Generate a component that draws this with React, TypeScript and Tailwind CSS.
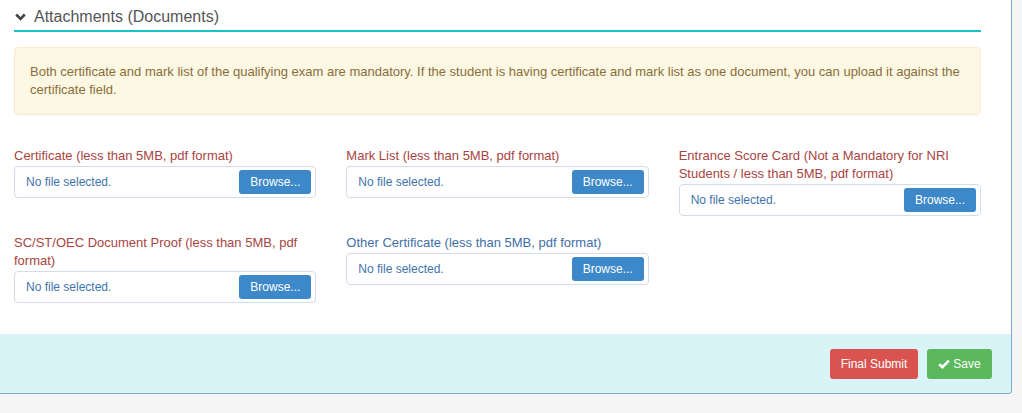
import React from 'react';

/**
 * Attachments step of the application form: document uploads + submit footer.
 */

type Field = { label: string; tone: 'red' | 'blue' };

const FIELDS: Field[] = [
    { label: 'Certificate (less than 5MB, pdf format)', tone: 'red' },
    { label: 'Mark List (less than 5MB, pdf format)', tone: 'red' },
    { label: 'Entrance Score Card (Not a Mandatory for NRI Students / less than 5MB, pdf format)', tone: 'red' },
    { label: 'SC/ST/OEC Document Proof (less than 5MB, pdf format)', tone: 'red' },
    { label: 'Other Certificate (less than 5MB, pdf format)', tone: 'blue' },
];

function FileField({ label, tone }: Field) {
    return (
        <div className="flex flex-col self-start">
            <label className={`text-[13px] leading-[18px] ${tone === 'red' ? 'text-[#a94442]' : 'text-[#3f6fa8]'}`}>{label}</label>
            <div className="mt-[1px] flex h-[32px] items-center justify-between rounded-[4px] border border-[#d3dde8] bg-white pl-[11px] pr-[4px]">
                <span className="text-[12px] text-[#3f73ad]">No file selected.</span>
                <button type="button" className="h-[24px] w-[72px] rounded-[3px] bg-[#3d88c9] text-[12px] text-white">
                    Browse...
                </button>
            </div>
        </div>
    );
}

export default function App() {
    return (
        <div className="min-h-screen bg-[#f5f5f5] font-['Liberation_Sans',Arial,sans-serif]">
            <div className="w-[1012px] overflow-hidden rounded-br-[4px] border-r border-b border-[#7ea6d6] bg-white">
                <div className="pl-[14px] pr-[30px] pb-[31px]">
                    {/* section heading */}
                    <div className="flex h-[32px] items-center gap-[8px] border-b-2 border-[#1fc1c9] pt-[3px] pl-[1px]">
                        <svg width="11" height="8" viewBox="0 0 11 8" className="text-[#444]">
                            <path d="M1.2 1.5 L5.5 5.8 L9.8 1.5" fill="none" stroke="currentColor" strokeWidth="2.6" />
                        </svg>
                        <h3 className="text-[16px] text-[#555]">Attachments (Documents)</h3>
                    </div>

                    <div className="mt-[15px] rounded-[4px] border border-[#faebcc] bg-[#fcf8e3] px-[15px] py-[15px] text-[13px] leading-[18px] text-[#8a6d3b]">
                        Both certificate and mark list of the qualifying exam are mandatory. If the student is having certificate and mark list as one document, you can upload it against the certificate field.
                    </div>

                    <div className="mt-[32px] grid grid-cols-3 gap-x-[30px] gap-y-[18px]">
                        {FIELDS.map((f) => (
                            <FileField key={f.label} {...f} />
                        ))}
                    </div>
                </div>

                {/* footer */}
                <div className="flex h-[59px] justify-end gap-[9px] bg-[#d9f4f6] pt-[15px] pr-[19px]">
                    <button type="button" className="h-[30px] w-[88px] rounded-[3px] bg-[#d9534f] text-[12px] text-white">
                        Final Submit
                    </button>
                    <button type="button" className="flex h-[30px] w-[65px] items-center justify-center gap-[3px] rounded-[3px] bg-[#5cb85c] text-[12px] text-white">
                        <svg width="12" height="10" viewBox="0 0 12 10">
                            <path d="M1.2 5.2 L4.4 8.2 L10.8 1.6" fill="none" stroke="white" strokeWidth="2.6" />
                        </svg>
                        Save
                    </button>
                </div>
            </div>
        </div>
    );
}
